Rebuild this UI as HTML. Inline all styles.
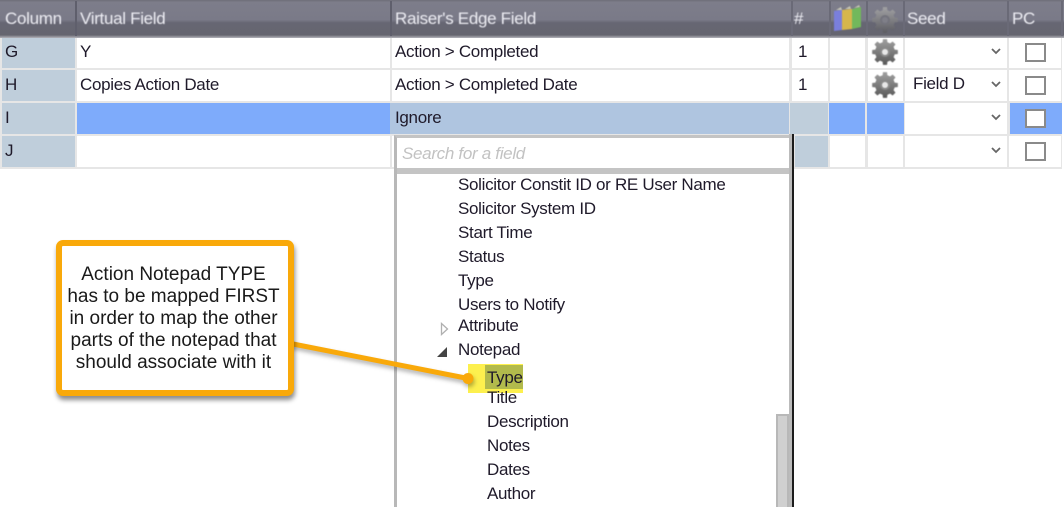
<!DOCTYPE html>
<html>
<head>
<meta charset="utf-8">
<style>
html,body{margin:0;padding:0;background:#fff}
#p{position:relative;width:1064px;height:507px;overflow:hidden;background:#fff;font-family:"Liberation Sans",sans-serif;color:#222}
.b{position:absolute}
.t{position:absolute;white-space:nowrap;font-size:17px;line-height:20px;filter:blur(.35px);color:#1f1a2a;letter-spacing:-.31px}
.h{color:#eeeef4;filter:blur(.4px);top:9px}
.cb{position:absolute;border:2px solid #8a8a8a;background:#fff;box-sizing:content-box;left:1025px;width:17px;height:15px}
.ch{position:absolute;left:990px}
</style>
</head>
<body>
<div id="p">
<!-- header -->
<div class="b" style="left:0;top:0;width:1064px;height:38px;background:linear-gradient(#6e6e78 0,#7d7d8a 6%,#7a7a88 52%,#666673 60%,#65656f 92%,#b4b4ba 100%)"></div>
<div class="b" style="left:75px;top:1px;width:2px;height:35px;background:#5f5f6c"></div>
<div class="b" style="left:390px;top:1px;width:2px;height:35px;background:#5f5f6c"></div>
<div class="b" style="left:791px;top:1px;width:2px;height:35px;background:#6a6a77"></div>
<div class="b" style="left:829px;top:1px;width:2px;height:35px;background:#6a6a77"></div>
<div class="b" style="left:866px;top:1px;width:2px;height:35px;background:#6a6a77"></div>
<div class="b" style="left:903px;top:1px;width:2px;height:35px;background:#6a6a77"></div>
<div class="b" style="left:1007px;top:1px;width:2px;height:35px;background:#6a6a77"></div>
<div class="b" style="left:1061px;top:1px;width:2px;height:35px;background:#6a6a77"></div>
<div class="t h" style="left:5px">Column</div>
<div class="t h" style="left:80px">Virtual Field</div>
<div class="t h" style="left:395px">Raiser's Edge Field</div>
<div class="t h" style="left:794px">#</div>
<div class="t h" style="left:907px">Seed</div>
<div class="t h" style="left:1012px">PC</div>
<!-- header books icon -->
<svg class="b" style="left:833px;top:5px;filter:blur(.5px)" width="29" height="27" viewBox="0 0 29 27">
<path d="M1 6l8-1v20l-8 1z" fill="#7a7fdc"/>
<path d="M9 5l10-1v20l-10 1z" fill="#d6b64c"/>
<path d="M19 4l9-2v20l-9 2z" fill="#72b85c"/>
<path d="M3 5l5-3 1 3zM12 4l5-3 1 3zM21 3l5-3 1 2z" fill="#c4c4b4"/>
</svg>
<!-- body rows backgrounds -->
<div class="b" style="left:0;top:38px;width:1062px;height:131px;background:#e6e6e6"></div>
<div class="b" style="left:2px;top:38px;width:73px;height:30px;background:#bfcedb"></div>
<div class="b" style="left:2px;top:70px;width:73px;height:31px;background:#bfcedb"></div>
<div class="b" style="left:2px;top:103px;width:73px;height:31px;background:#bfcedb"></div>
<div class="b" style="left:2px;top:136px;width:73px;height:31px;background:#bfcedb"></div>
<!-- G -->
<div class="b" style="left:77px;top:38px;width:313px;height:30px;background:#fff"></div>
<div class="b" style="left:392px;top:38px;width:397px;height:30px;background:#fff"></div>
<div class="b" style="left:792px;top:38px;width:36px;height:30px;background:#fff"></div>
<div class="b" style="left:830px;top:38px;width:35px;height:30px;background:#fff"></div>
<div class="b" style="left:868px;top:38px;width:35px;height:30px;background:#fff"></div>
<div class="b" style="left:905px;top:38px;width:102px;height:30px;background:#fff"></div>
<div class="b" style="left:1009px;top:38px;width:52px;height:30px;background:#fff"></div>
<!-- H -->
<div class="b" style="left:77px;top:70px;width:313px;height:31px;background:#fff"></div>
<div class="b" style="left:392px;top:70px;width:397px;height:31px;background:#fff"></div>
<div class="b" style="left:792px;top:70px;width:36px;height:31px;background:#fff"></div>
<div class="b" style="left:830px;top:70px;width:35px;height:31px;background:#fff"></div>
<div class="b" style="left:868px;top:70px;width:35px;height:31px;background:#fff"></div>
<div class="b" style="left:905px;top:70px;width:102px;height:31px;background:#fff"></div>
<div class="b" style="left:1009px;top:70px;width:52px;height:31px;background:#fff"></div>
<!-- I -->
<div class="b" style="left:77px;top:103px;width:313px;height:31px;background:#7eabfb"></div>
<div class="b" style="left:390px;top:103px;width:399px;height:31px;background:#afc5e0"></div>
<div class="b" style="left:790px;top:103px;width:38px;height:31px;background:#bfcedb"></div>
<div class="b" style="left:829px;top:103px;width:36px;height:31px;background:#7eabfb"></div>
<div class="b" style="left:867px;top:103px;width:37px;height:31px;background:#7eabfb"></div>
<div class="b" style="left:905px;top:103px;width:102px;height:31px;background:#fff"></div>
<div class="b" style="left:1010px;top:103px;width:52px;height:31px;background:#7eabfb"></div>
<!-- J -->
<div class="b" style="left:77px;top:136px;width:313px;height:31px;background:#fff"></div>
<div class="b" style="left:392px;top:136px;width:397px;height:31px;background:#fff"></div>
<div class="b" style="left:795px;top:136px;width:33px;height:31px;background:#bfcedb"></div>
<div class="b" style="left:830px;top:136px;width:35px;height:31px;background:#fff"></div>
<div class="b" style="left:868px;top:136px;width:35px;height:31px;background:#fff"></div>
<div class="b" style="left:905px;top:136px;width:102px;height:31px;background:#fff"></div>
<div class="b" style="left:1009px;top:136px;width:52px;height:31px;background:#fff"></div>
<!-- row text -->
<div class="t" style="left:5px;top:42px">G</div>
<div class="t" style="left:5px;top:75px">H</div>
<div class="t" style="left:5px;top:108px">I</div>
<div class="t" style="left:5px;top:141px">J</div>
<div class="t" style="left:80px;top:42px">Y</div>
<div class="t" style="left:80px;top:75px">Copies Action Date</div>
<div class="t" style="left:395px;top:42px">Action &gt; Completed</div>
<div class="t" style="left:395px;top:75px">Action &gt; Completed Date</div>
<div class="t" style="left:395px;top:108px">Ignore</div>
<div class="t" style="left:798px;top:42px">1</div>
<div class="t" style="left:798px;top:75px">1</div>
<div class="t" style="left:913px;top:74px">Field D</div>
<!-- gears -->
<svg width="0" height="0" style="position:absolute"><defs>
<linearGradient id="g1" x1="0" y1="0" x2="0" y2="1"><stop offset="0" stop-color="#a0a0a0"/><stop offset="1" stop-color="#585858"/></linearGradient>
<linearGradient id="g2" x1="0" y1="0" x2="0" y2="1"><stop offset="0" stop-color="#a2a2a4"/><stop offset="1" stop-color="#5c5c62"/></linearGradient>
<path id="gp" d="M10.58 3.3L10.97 .16H15.03L15.42 3.3L18.15 4.43L20.64 2.48L23.52 5.36L21.57 7.85L22.7 10.58L25.84 10.97V15.03L22.7 15.42L21.57 18.15L23.52 20.64L20.64 23.52L18.15 21.57L15.42 22.7L15.03 25.84H10.97L10.58 22.7L7.85 21.57L5.36 23.52L2.48 20.64L4.43 18.15L3.3 15.42L.16 15.03V10.97L3.3 10.58L4.43 7.85L2.48 5.36L5.36 2.48L7.85 4.43Z"/>
</defs></svg>
<svg class="b" style="left:872px;top:7px;filter:blur(.6px)" width="26" height="26"><use href="#gp" fill="url(#g2)"/><circle cx="13" cy="13" r="5" fill="#73737c"/><circle cx="13" cy="13" r="3" fill="#7f7f88"/></svg>
<svg class="b" style="left:872px;top:39px;filter:blur(.5px)" width="26" height="26"><use href="#gp" fill="url(#g1)"/><circle cx="13" cy="13" r="5" fill="#8a8a8a"/><circle cx="13" cy="13" r="3" fill="#e8e8e8"/></svg>
<svg class="b" style="left:872px;top:72px;filter:blur(.5px)" width="26" height="26"><use href="#gp" fill="url(#g1)"/><circle cx="13" cy="13" r="5" fill="#8a8a8a"/><circle cx="13" cy="13" r="3" fill="#e8e8e8"/></svg>
<!-- chevrons -->
<svg class="ch" style="top:47px" width="12" height="8"><path d="M2 2l4 4 4-4" fill="none" stroke="#666" stroke-width="1.8"/></svg>
<svg class="ch" style="top:80px" width="12" height="8"><path d="M2 2l4 4 4-4" fill="none" stroke="#666" stroke-width="1.8"/></svg>
<svg class="ch" style="top:113px" width="12" height="8"><path d="M2 2l4 4 4-4" fill="none" stroke="#666" stroke-width="1.8"/></svg>
<svg class="ch" style="top:146px" width="12" height="8"><path d="M2 2l4 4 4-4" fill="none" stroke="#666" stroke-width="1.8"/></svg>
<!-- checkboxes -->
<div class="cb" style="top:43px"></div>
<div class="cb" style="top:76px"></div>
<div class="cb" style="top:109px"></div>
<div class="cb" style="top:142px"></div>
<!-- dropdown -->
<div class="b" style="left:394px;top:135px;width:398px;height:372px;background:#fff;box-sizing:border-box;border-left:3px solid #b8b8b8;border-top:3px solid #c4c4c4;border-right:0"></div>
<div class="b" style="left:789px;top:134px;width:3px;height:373px;background:#bbb"></div>
<div class="b" style="left:792px;top:134px;width:2px;height:373px;background:#1c1c1c"></div>
<div class="b" style="left:397px;top:168px;width:392px;height:6px;background:#c4c4c4"></div>
<div class="t" style="left:402px;top:144px;font-style:italic;color:#c2c2c2">Search for a field</div>
<div class="t" style="left:458px;top:175px">Solicitor Constit ID or RE User Name</div>
<div class="t" style="left:458px;top:199px">Solicitor System ID</div>
<div class="t" style="left:458px;top:223px">Start Time</div>
<div class="t" style="left:458px;top:247px">Status</div>
<div class="t" style="left:458px;top:271px">Type</div>
<div class="t" style="left:458px;top:295px">Users to Notify</div>
<div class="t" style="left:458px;top:316px">Attribute</div>
<div class="t" style="left:458px;top:340px">Notepad</div>
<!-- highlight -->
<div class="b" style="left:468px;top:364px;width:55px;height:29px;background:#fdf04e"></div>
<div class="b" style="left:485px;top:365px;width:38px;height:24px;background:#b2ba4c"></div>
<div class="t" style="left:487px;top:368px">Type</div>
<div class="t" style="left:487px;top:388px">Title</div>
<div class="t" style="left:487px;top:412px">Description</div>
<div class="t" style="left:487px;top:436px">Notes</div>
<div class="t" style="left:487px;top:460px">Dates</div>
<div class="t" style="left:487px;top:484px">Author</div>
<!-- tree arrows -->
<svg class="b" style="left:439px;top:321px" width="12" height="16"><path d="M2.5 2.5l6 5.5-6 5.500z" fill="#fff" stroke="#b0b0b0" stroke-width="1.300"/></svg>
<svg class="b" style="left:436px;top:346px" width="12" height="12"><path d="M1 11h10V1z" fill="#444"/></svg>
<!-- scrollbar -->
<div class="b" style="left:776px;top:414px;width:13px;height:93px;box-sizing:border-box;background:#d0d0d0;border:2px solid #b8b8b8;border-bottom:0"></div>
<!-- callout line -->
<svg class="b" style="left:0;top:0;filter:drop-shadow(1px 3px 2px rgba(0,0,0,.3))" width="1064" height="507">
<path d="M288 343L468 378.500" stroke="#f9a90a" stroke-width="5" fill="none"/>
<circle cx="468" cy="378.500" r="5.500" fill="#f9a90a"/>
</svg>
<!-- callout box -->
<div class="b" style="left:56px;top:240px;width:238px;height:156px;box-sizing:border-box;border:6px solid #f9a90a;border-radius:7px;background:#fff;box-shadow:1px 4px 5px rgba(0,0,0,.45)"></div>
<div class="b" style="left:56px;top:264px;width:235px;text-align:center;font-size:19px;line-height:22px;color:#1a1a1a;white-space:nowrap">Action Notepad TYPE<br>has to be mapped FIRST<br>in order to map the other<br>parts of the notepad that<br>should associate with it</div>
</div>
</body>
</html>
